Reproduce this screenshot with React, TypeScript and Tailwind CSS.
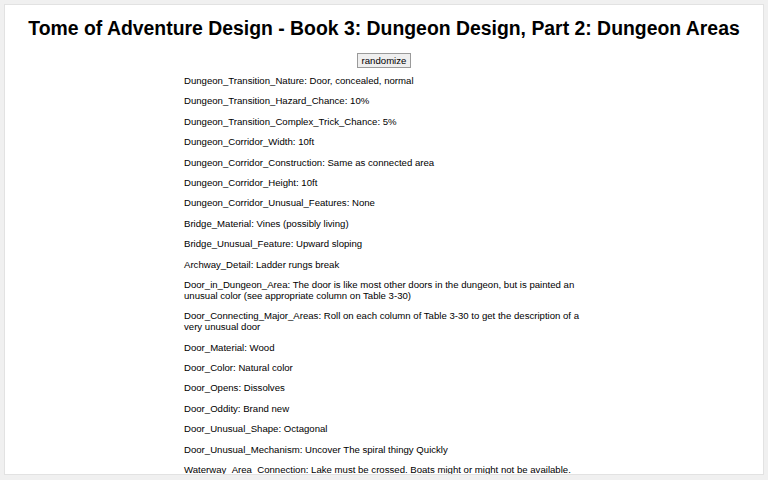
import { FC } from 'react';

type Entry = {
  label: string;
  value: string;
};

const entries: Entry[] = [
  { label: 'Dungeon_Transition_Nature', value: 'Door, concealed, normal' },
  { label: 'Dungeon_Transition_Hazard_Chance', value: '10%' },
  { label: 'Dungeon_Transition_Complex_Trick_Chance', value: '5%' },
  { label: 'Dungeon_Corridor_Width', value: '10ft' },
  { label: 'Dungeon_Corridor_Construction', value: 'Same as connected area' },
  { label: 'Dungeon_Corridor_Height', value: '10ft' },
  { label: 'Dungeon_Corridor_Unusual_Features', value: 'None' },
  { label: 'Bridge_Material', value: 'Vines (possibly living)' },
  { label: 'Bridge_Unusual_Feature', value: 'Upward sloping' },
  { label: 'Archway_Detail', value: 'Ladder rungs break' },
  {
    label: 'Door_in_Dungeon_Area',
    value:
      'The door is like most other doors in the dungeon, but is painted an unusual color (see appropriate column on Table 3-30)'
  },
  {
    label: 'Door_Connecting_Major_Areas',
    value: 'Roll on each column of Table 3-30 to get the description of a very unusual door'
  },
  { label: 'Door_Material', value: 'Wood' },
  { label: 'Door_Color', value: 'Natural color' },
  { label: 'Door_Opens', value: 'Dissolves' },
  { label: 'Door_Oddity', value: 'Brand new' },
  { label: 'Door_Unusual_Shape', value: 'Octagonal' },
  { label: 'Door_Unusual_Mechanism', value: 'Uncover The spiral thingy Quickly' },
  {
    label: 'Waterway_Area_Connection',
    value: 'Lake must be crossed. Boats might or might not be available.'
  },
  { label: 'Waterway_Feature', value: 'Whirlpool' },
  { label: 'Room_Shape', value: 'Square' }
];

const App: FC = () => {
  return (
    <div className="h-[480px] bg-[#f0f0f0] p-1 font-['Liberation_Sans',Arial,sans-serif] text-black">
      <div className="flex h-[471px] flex-col items-center overflow-hidden border border-[#e2e2e2] bg-white">
        <h1 className="mt-[12px] whitespace-nowrap text-[19.4px] font-bold leading-[23px]">
          Tome of Adventure Design - Book 3: Dungeon Design, Part 2: Dungeon Areas
        </h1>
        <button
          type="button"
          className="mt-[13px] border border-[#9a9a9a] bg-[#efefef] px-[4px] text-[9.6px] leading-[13px] text-black"
        >
          randomize
        </button>
        <div className="mt-[7px] flex w-[400px] flex-col gap-[9.4px] text-[9.6px] leading-[11px]">
          {entries.map((entry) => (
            <p key={entry.label}>
              {entry.label}: {entry.value}
            </p>
          ))}
        </div>
      </div>
    </div>
  );
};

export default App;
